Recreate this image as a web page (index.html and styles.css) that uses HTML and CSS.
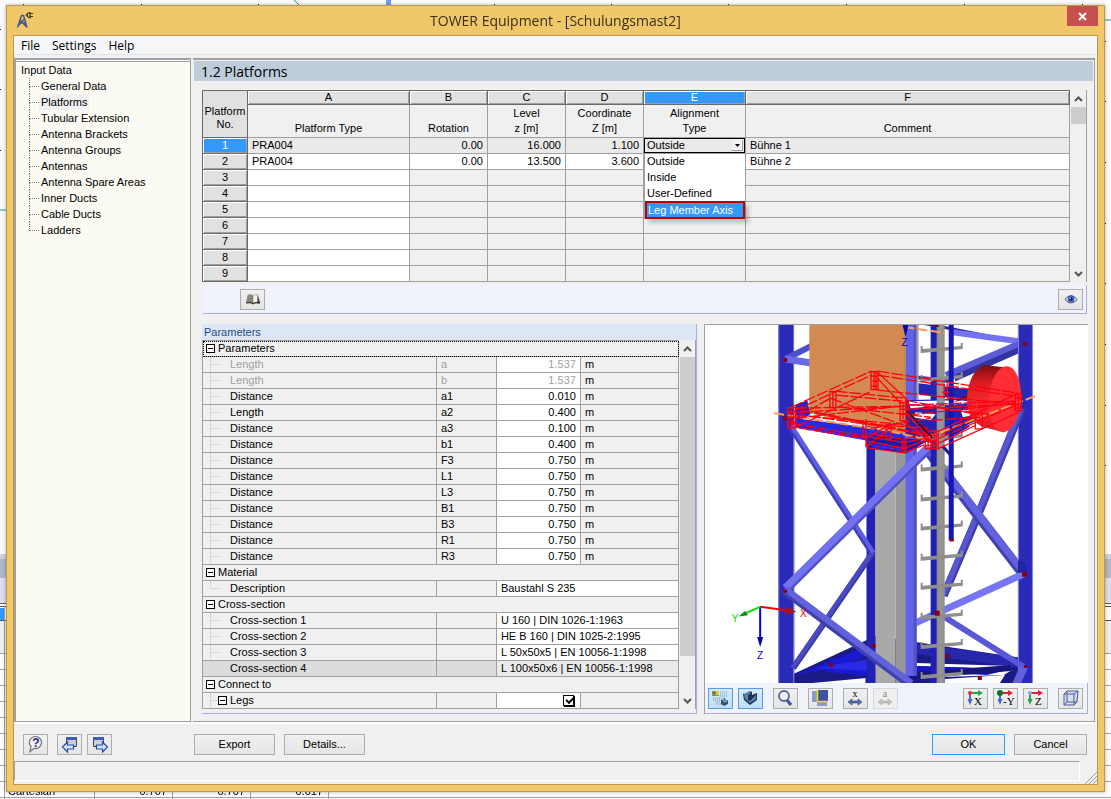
FILE: index.html
```html
<!DOCTYPE html>
<html lang="en">
<head>
    <meta charset="UTF-8">
    <meta name="viewport" content="width=device-width, initial-scale=1.0">
    <title>TOWER Equipment</title>

    <link rel="stylesheet" href="styles.css">
</head>
<body>
<!-- main program behind the dialog -->
<svg class="backdrop" aria-hidden="true">
    <g fill="#222">
        <path d="M23 4h1v1h-1zM141 4h1v1h-1zM258 4h1v1h-1zM494 4h1v1h-1zM611 4h1v1h-1zM728 4h1v1h-1zM846 4h1v1h-1zM964 4h1v1h-1zM1082 4h1v1h-1z"/>
        <path d="M0 29h1v1h-1zM0 89h1v1h-1zM0 150h1v1h-1zM1105 41h1v1h-1zM1105 101h1v1h-1zM1105 162h1v1h-1zM1105 223h1v1h-1zM1105 283h1v1h-1zM1105 344h1v1h-1zM1105 405h1v1h-1zM1105 465h1v1h-1z"/>
    </g>
    <path d="M294 0l5 5M0 210h6M1105 20h6" stroke="#2a8f8f"/>
    <path d="M386 0h5v5h-5z" fill="#6ea3e8"/>
    <rect y="554" width="100%" height="5" fill="#cdd2e2"/>
    <rect y="559" width="100%" height="19" fill="#b2b9c4"/>
    <rect y="578" width="100%" height="25" fill="#dcdfeb"/>
    <rect y="603" width="100%" height="1" fill="#666"/>
    <rect y="606" width="100%" height="1" fill="#555"/>
    <rect y="608" width="4" height="12" fill="#3399ff"/>
    <rect y="620" width="100%" height="1" fill="#555"/>
    <rect y="621" width="100%" height="32" fill="#efefef"/>
    <path d="M0 653.5h1920M0 669.5h1920M0 685.5h1920M0 701.5h1920M0 717.5h1920M0 733.5h1920M0 749.5h1920M0 765.5h1920M0 781.5h1920M0 797.5h1920M4.500 606v193M94.500 781v18M172.500 781v18M250.500 781v18M328.500 781v18" stroke="#a0a0a0"/>
    <g font-family="Liberation Sans, sans-serif" font-size="11">
        <text x="8" y="795">Cartesian</text>
        <text x="167" y="795" text-anchor="end">0.707</text>
        <text x="245" y="795" text-anchor="end">0.707</text>
        <text x="323" y="795" text-anchor="end">0.017</text>
    </g>
</svg>

<div class="window">
    <header class="titlebar">
        <svg class="appicon" width="18" height="18" viewBox="0 0 18 18" fill="none" stroke="#4a5590">
            <path d="M1.500 16.500l4-12h2l3.500 12M3 12h7M4 8.500l6 7M8 8.500l-5.500 6" stroke-width="1.500"/>
            <path d="M9.500 4h2.500M14 2.500h3M14 5.500h3M14 1v6.500M14 1.500q-3 0-3 2.500t3 2.500" stroke="#3a3320" stroke-width="1.200"/>
        </svg>
        <h1>TOWER Equipment - [Schulungsmast2]</h1>
        <button class="close" aria-label="Close"><svg width="9" height="9" viewBox="0 0 9 9"><path d="M1 1l7 7M8 1l-7 7" stroke="#fff" stroke-width="2"/></svg></button>
    </header>

    <div class="client">
        <nav class="menu">
            <a href="#file">File</a>
            <a href="#settings">Settings</a>
            <a href="#help">Help</a>
        </nav>

        <div class="main">
            <aside class="tree">
                <div>Input Data</div>
                <ul>
                    <li><a href="#general">General Data</a></li>
                    <li><a href="#platforms" class="active">Platforms</a></li>
                    <li><a href="#tubular">Tubular Extension</a></li>
                    <li><a href="#brackets">Antenna Brackets</a></li>
                    <li><a href="#groups">Antenna Groups</a></li>
                    <li><a href="#antennas">Antennas</a></li>
                    <li><a href="#spare">Antenna Spare Areas</a></li>
                    <li><a href="#inner">Inner Ducts</a></li>
                    <li><a href="#cable">Cable Ducts</a></li>
                    <li><a href="#ladders">Ladders</a></li>
                </ul>
            </aside>

            <section class="content">
                <h2>1.2 Platforms</h2>

                <div class="gridbox">
                    <table class="grid">
                        <colgroup>
                            <col class="c-no"><col class="c-a"><col class="c-n"><col class="c-n"><col class="c-n"><col class="c-e"><col>
                        </colgroup>
                        <thead>
                            <tr class="letters">
                                <th rowspan="2" class="corner">Platform<br>No.</th>
                                <th>A</th><th>B</th><th>C</th><th>D</th><th class="sel">E</th><th>F</th>
                            </tr>
                            <tr class="names">
                                <th>Platform Type</th>
                                <th>Rotation</th>
                                <th>Level<br>z [m]</th>
                                <th>Coordinate<br>Z [m]</th>
                                <th>Alignment<br>Type</th>
                                <th>Comment</th>
                            </tr>
                        </thead>
                        <tbody>
                            <tr class="current">
                                <th class="sel">1</th><td>PRA004</td><td class="num">0.00</td><td class="num">16.000</td><td class="num">1.100</td>
                                <td class="combo">
                                    <select aria-label="Alignment type"><option>Outside</option></select>
                                    <svg class="arrow" width="11" height="11" viewBox="0 0 11 11"><path d="M0 0h11v11h-11z" fill="#f4f4f4"/><path d="M0 10.500h10.500v-10.500" fill="none" stroke="#a0a0a0"/><path d="M3 4h5l-2.500 3z"/></svg>
                                    <ul class="dropdown">
                                        <li>Outside</li>
                                        <li>Inside</li>
                                        <li>User-Defined</li>
                                        <li class="marked">Leg Member Axis</li>
                                    </ul>
                                </td>
                                <td>Bühne 1</td>
                            </tr>
                            <tr class="filled"><th>2</th><td>PRA004</td><td class="num">0.00</td><td class="num">13.500</td><td class="num">3.600</td><td></td><td>Bühne 2</td></tr>
                            <tr><th>3</th><td></td><td></td><td></td><td></td><td></td><td></td></tr>
                            <tr><th>4</th><td></td><td></td><td></td><td></td><td></td><td></td></tr>
                            <tr><th>5</th><td></td><td></td><td></td><td></td><td></td><td></td></tr>
                            <tr><th>6</th><td></td><td></td><td></td><td></td><td></td><td></td></tr>
                            <tr><th>7</th><td></td><td></td><td></td><td></td><td></td><td></td></tr>
                            <tr><th>8</th><td></td><td></td><td></td><td></td><td></td><td></td></tr>
                            <tr><th>9</th><td></td><td></td><td></td><td></td><td></td><td></td></tr>
                        </tbody>
                    </table>
                    <div class="scroll">
                        <svg width="9" height="6" viewBox="0 0 9 6"><path d="M1 5l3.500-3.500l3.500 3.500" fill="none" stroke="#555" stroke-width="2"/></svg>
                        <div class="track"><div class="thumb small"></div></div>
                        <svg width="9" height="6" viewBox="0 0 9 6"><path d="M1 1l3.500 3.500l3.500-3.500" fill="none" stroke="#555" stroke-width="2"/></svg>
                    </div>
                </div>

                <div class="toolbar gridtools">
                    <button class="tool" aria-label="Library"><svg width="16" height="14" viewBox="0 0 18 16"><path d="M1 12l2-9q4-1 6 1v9q-3-2-8-1z" fill="#8b8478"/><path d="M9 4q3-2 5-1l3 9q-5-1-8 1z" fill="#f4f0e6" stroke="#777" stroke-width=".6"/><path d="M14 3l3 9v1h-3z" fill="#444"/><path d="M1 12.500q6-1 8 1q3-2 8-1" fill="none" stroke="#333" stroke-width="1.400"/></svg></button>
                    <button class="tool" aria-label="View"><svg width="14" height="11" viewBox="0 0 16 12"><path d="M1 6q7-9 14 0q-7 8-14 0z" fill="#e8ecf6" stroke="#444"/><circle cx="8" cy="5.500" r="4" fill="#3e63c8"/><circle cx="8" cy="5.500" r="1.700" fill="#0d1a4a"/><circle cx="7" cy="4.500" r=".8" fill="#fff"/></svg></button>
                </div>

                <div class="lower">
                    <div class="params">
                        <h3>Parameters</h3>
                        <div class="parambox">
                            <table class="plist">
                                <colgroup><col><col class="p-sym"><col class="p-val"><col class="p-unit"></colgroup>
                                <tbody>
                                <tr class="group focus"><th colspan="4"><i class="minus"></i>Parameters</th></tr>
                                <tr class="off"><th>Length</th><td>a</td><td class="val">1.537</td><td>m</td></tr>
                                <tr class="off"><th>Length</th><td>b</td><td class="val">1.537</td><td>m</td></tr>
                                <tr><th>Distance</th><td>a1</td><td class="val">0.010</td><td>m</td></tr>
                                <tr><th>Length</th><td>a2</td><td class="val">0.400</td><td>m</td></tr>
                                <tr><th>Distance</th><td>a3</td><td class="val">0.100</td><td>m</td></tr>
                                <tr><th>Distance</th><td>b1</td><td class="val">0.400</td><td>m</td></tr>
                                <tr><th>Distance</th><td>F3</td><td class="val">0.750</td><td>m</td></tr>
                                <tr><th>Distance</th><td>L1</td><td class="val">0.750</td><td>m</td></tr>
                                <tr><th>Distance</th><td>L3</td><td class="val">0.750</td><td>m</td></tr>
                                <tr><th>Distance</th><td>B1</td><td class="val">0.750</td><td>m</td></tr>
                                <tr><th>Distance</th><td>B3</td><td class="val">0.750</td><td>m</td></tr>
                                <tr><th>Distance</th><td>R1</td><td class="val">0.750</td><td>m</td></tr>
                                <tr><th>Distance</th><td>R3</td><td class="val">0.750</td><td>m</td></tr>
                                <tr class="group"><th colspan="4"><i class="minus"></i>Material</th></tr>
                                <tr class="last"><th>Description</th><td></td><td colspan="2" class="txt">Baustahl S 235</td></tr>
                                <tr class="group"><th colspan="4"><i class="minus"></i>Cross-section</th></tr>
                                <tr><th>Cross-section 1</th><td></td><td colspan="2" class="txt">U 160 | DIN 1026-1:1963</td></tr>
                                <tr><th>Cross-section 2</th><td></td><td colspan="2" class="txt">HE B 160 | DIN 1025-2:1995</td></tr>
                                <tr><th>Cross-section 3</th><td></td><td colspan="2" class="txt">L 50x50x5 | EN 10056-1:1998</td></tr>
                                <tr class="picked"><th>Cross-section 4</th><td></td><td colspan="2" class="txt">L 100x50x6 | EN 10056-1:1998</td></tr>
                                <tr class="group"><th colspan="4"><i class="minus"></i>Connect to</th></tr>
                                <tr class="sub"><th><i class="minus"></i><label for="legs">Legs</label></th><td></td><td class="val"><input type="checkbox" id="legs" checked></td><td></td></tr>
                                </tbody>
                            </table>
                            <div class="scroll">
                                <svg width="9" height="6" viewBox="0 0 9 6"><path d="M1 5l3.500-3.500l3.500 3.500" fill="none" stroke="#555" stroke-width="2"/></svg>
                                <div class="track"><div class="thumb long"></div></div>
                                <svg width="9" height="6" viewBox="0 0 9 6"><path d="M1 1l3.500 3.500l3.500-3.500" fill="none" stroke="#555" stroke-width="2"/></svg>
                            </div>
                        </div>
                    </div>

                    <div class="view">
                        <svg class="scene" viewBox="705 325 382 357" preserveAspectRatio="xMidYMid slice">
                            <defs>
                                <linearGradient id="drum" x1="0" y1="0" x2="0" y2="1">
                                    <stop offset="0" stop-color="#7a0c10"/><stop offset=".25" stop-color="#d81c22"/><stop offset=".6" stop-color="#fa2a30"/><stop offset="1" stop-color="#d82026"/>
                                </linearGradient>
                            </defs>
                            <!-- far bracing -->
                            <g fill="none">
                                <path d="M916 322l107 21" stroke="#2a2a9c" stroke-width="3"/>
                                <path d="M950 332l73 10" stroke="#7474f2" stroke-width="6"/>
                                <path d="M953 377l70 -31" stroke="#3434a0" stroke-width="9"/>
                                <path d="M945 375l77 -33" stroke="#5c5cd8" stroke-width="6"/>
                                <path d="M905 376l45 5" stroke="#3a3ab4" stroke-width="4"/>
                            </g>
                            <!-- base frame -->
                            <path d="M778 682l0-2l97-45l146 22l-6 25z" fill="#1b1b86"/>
                            <path d="M795 674l80-32v10l-45 16zM830 658l50 8v10l-55-5z" fill="#1919d2"/>
                            <path d="M815 667l60-10 15 2 0 7-20 4z" fill="#2a2ae6"/>
                            <path d="M916 643l105 14v10l-105-14z" fill="#2727ae"/>
                            <path d="M916 662l95 3-8 3-87-3z" fill="#fff"/>
                            <path d="M812 682l54-5 0 5zM943 671l68-2-8 5-60 2zM944 678l60-4-5 8h-55z" fill="#fff"/>
                            <path d="M916 665l95 3-25 6-70-3z" fill="#1717c8"/>
                            <path d="M865 675l145-11v6l-145 12z" fill="#15157a"/>
                            <!-- columns -->
                            <path d="M866 325h9v357h-9z" fill="#2222b2"/>
                            <path d="M778 325h16v357h-16z" fill="#2a2ab8"/>
                            <path d="M1017 325h15v357h-15z" fill="#2a2ab8"/>
                            <path d="M778.500 325v357M793.500 325v357M1017.500 325v357M1031.500 325v357" stroke="#8a8ad6"/>
                            <path d="M794 410l72 20v-105h-72z" fill="#fff"/>
                            <path d="M785 359l26-13" stroke="#4e4ed0" stroke-width="6"/>
                            <path d="M785 359l26 4" stroke="#6a6ae6" stroke-width="7"/>
                            <!-- diagonals -->
                            <g fill="none">
                                <path d="M873 551l-80 116" stroke="#3b3ba4" stroke-width="6"/>
                                <path d="M872 551l-80 116" stroke="#4a4ac4" stroke-width="4"/>
                                <path d="M790 426l82 127" stroke="#3f3fb8" stroke-width="6"/>
                                <path d="M791 425l82 127" stroke="#5e5ee6" stroke-width="4"/>
                                <path d="M1021 408l-46 112-32 75" stroke="#3e3eae" stroke-width="8"/>
                                <path d="M1020 408l-46 112-32 75" stroke="#5757d2" stroke-width="5"/>
                                <path d="M926 449l96 124" stroke="#4040b0" stroke-width="10"/>
                                <path d="M927 448l96 124" stroke="#6262dc" stroke-width="7"/>
                                <path d="M1023 573l-108 49" stroke="#7676f4" stroke-width="7"/>
                                <path d="M937 612l86 54" stroke="#5858d6" stroke-width="6"/>
                                <path d="M1023 666l-8 18" stroke="#6262dc" stroke-width="8"/>
                            </g>
                            <path d="M1017 560h6l4 12h-10z" fill="#2323a8"/>
                            <!-- cable duct -->
                            <path d="M875 440h20v242h-20z" fill="#a9a9a9"/>
                            <path d="M895 440h11v242h-11z" fill="#989898"/>
                            <path d="M905 325h11v350h-11z" fill="#6262ea"/>
                            <path d="M913 325h3v350h-3z" fill="#5353c6"/>
                            <path d="M916 325h2v78h-2z" fill="#a0a0a8"/>
                            <g fill="none">
                                <path d="M928 448l-142 140" stroke="#5050c4" stroke-width="9"/>
                                <path d="M927 447l-142 140" stroke="#7272f2" stroke-width="7"/>
                                <path d="M784 590l126 94" stroke="#4040aa" stroke-width="8"/>
                                <path d="M785 588l126 94" stroke="#6262dc" stroke-width="6"/>
                            </g>
                            <path d="M930 325h8v357h-8z" fill="#2020b0"/>
                            <!-- antenna spare area -->
                            <path d="M809 325h96v109l-96-21z" fill="#d38a50"/>
                            <path d="M904.500 325v108" stroke="#b87848"/>
                            <!-- platform beams -->
                            <path d="M795 405l12-5 3 14-14 10z" fill="#2424c8"/>
                            <path d="M918 383l66 8v10l-66-7z" fill="#2525b4"/>
                            <path d="M795 418l80 10 30 6v12l-35-5-75-14z" fill="#2929de"/>
                            <path d="M868 435l60 5-22 13-37-5z" fill="#1b1ba8"/>
                            <path d="M872 444l30 3v3l-30-2z" fill="#2525e8"/>
                            <path d="M905 400l70-2 0 25-38 22-32-10z" fill="#2222b4"/>
                            <path d="M908 401l50-1 20 2-68 6zM960 410l40-1-38 8zM915 412l20 2-5 6-18-3zM966 425l25-13-20 15z" fill="#fff"/>
                            <path d="M936 325h8v357h-8z" fill="#909090"/>
                            <path d="M939 325h2v357h-2z" fill="#989898"/>
                            <!-- ladder rungs -->
                            <g fill="#8e8e8e">
                                <path id="rung" d="M920 346h2v3l38-3v-3h2v6l-41 4h-1z"/>
                                <use href="#rung" y="29"/><use href="#rung" y="88"/><use href="#rung" y="118"/><use href="#rung" y="148"/>
                                <use href="#rung" y="177"/><use href="#rung" y="207"/><use href="#rung" y="236"/><use href="#rung" y="266"/>
                                <use href="#rung" y="295"/><use href="#rung" y="325"/>
                            </g>
                            <path d="M948 325h5v215h-5z" fill="#1515b8"/>
                            <path d="M942 446l8 9" stroke="#1b1b90" stroke-width="3"/>
                            <!-- antenna -->
                            <path d="M953 402l30-8-10-4z" fill="#6a1020"/>
                            <path d="M984 365l25 3 -6 64-20-5q-16-6-17-28 2-28 18-34z" fill="url(#drum)"/>
                            <ellipse cx="1004" cy="399" rx="16" ry="33" transform="rotate(4 1004 399)" fill="#ff2d34"/>
                            <!-- platform wires -->
                            <g fill="none" stroke="#ff9a5a" stroke-width="2" stroke-dasharray="10 3">
                                <path d="M774 413l110 17 42 9M1034 396l-110 42M904 327l40 6"/>
                            </g>
                            <g fill="none" stroke="#ff0010" stroke-width="1.300">
                                <path d="M787.500 407.500h8v20h-8zM790.500 407v20M793.500 407v20M788 412h7M788 417h7M788 422h7"/>
                                <path d="M870.500 371.500h7v18h-7zM873.500 371v19M875.500 371v19M871 376h6M871 381h6M871 386h6"/>
                                <path d="M1014.500 393.500h6v17h-6zM1017.500 393v18M1015 398h5M1015 403h5M1015 408h5"/>
                                <path d="M924.500 430.500h13v18h-13zM927.500 430v18M930.500 429v19M933.500 430v18M935.500 431v17M925 435h13M925 440h13M925 445h13"/>
                                <path d="M899.500 402.500h8v18h-8zM902.500 403v16M905.500 398v18M900 409h8M900 414h8"/>
                                <path d="M829.500 391.500h6v16h-6zM832.500 392v15M946.500 383v17M941 392h8M974.500 413.500h7v15h-7zM977 421h2M943.500 384v14"/>
                                <path d="M864.500 437.500l3 10 36 5 20-8M865 436l38 6 22-4M867 433l37 6 24-8M868 441l36 7 25-10M862.500 419.500v18M865.500 419v28M885.500 424.500h5v14h-5zM865 438l25-14M865 447l25-20M901.500 440.500h4v12h-4zM903.500 440v12"/>
                                <path d="M907 410l20 22M907 414l26 30M902 420l28 22M877 378l23 25M877 372l30 28"/>
                                <path d="M938 448l80-36M938 443l37-18M940 435l35-19"/>
                            </g>
                            <g fill="none" stroke="#ff0010" stroke-width="1.300" stroke-dasharray="12 2">
                                <path d="M791 407l80-36M793 411l78-36M795 427l76-36M795 418l35-20"/>
                                <path d="M791 423l75 13M796 427l70 11M795 415l106 9M795 408l110-2M797 412l108-6M795 418l105-12M800 410l120 24M830 398l100 37"/>
                                <path d="M877 371l140 22M877 375l138 21M877 390l138 14M835 391l70 7M836 395l66 6"/>
                                <path d="M907 405l108-4M907 409l108-5M907 415l108-12M905 400l70 14M908 404l80 10M840 407l90 10M815 412l110 22"/>
                                <path d="M938 431l77-37M938 438l79-34"/>
                                <path d="M808 416l60 8 60 4M930 420l50-3M870 428l60-10"/>
                            </g>
                            <path d="M799 428l65 11M868 444l34 6M910 405l60 0" stroke="#a010b0" stroke-dasharray="5 2" fill="none"/>
                            <path d="M907 411l25 27" stroke="#2a0830" stroke-width="1.500"/>
                            <g fill="#8a0018">
                                <path d="M783 358h4v4h-4zM1022 342h4v4h-4zM783 416h4v4h-4zM949 538h4v3h-4zM1021 571h5v5h-5zM934 610h5v5h-5zM871 643h4v4h-4zM945 653h4v4h-4zM829 662h4v4h-4zM783 589h4v3h-4zM1023 664h3v3h-3zM934 324h4v3h-4zM977 675h4v4h-4z"/>
                            </g>
                            <!-- axes -->
                            <path d="M902 325h6l-3 12z" fill="#0808a0"/>
                            <path d="M760 606v37" stroke="#0000f0" stroke-width="2"/>
                            <path d="M757 636h6l-3 10z" fill="#0808a0"/>
                            <path d="M760 606l30 4" stroke="#f00000" stroke-width="2"/>
                            <path d="M786 606l10 5-11 3z" fill="#b01010"/>
                            <path d="M760 606l-16 7" stroke="#00e000" stroke-width="2"/>
                            <path d="M740 615l5-4 2 3z" fill="#108a10" stroke="#108a10"/>
                            <g font-family="Liberation Sans, sans-serif" font-size="10" text-anchor="middle">
                                <text x="904" y="346" fill="#0000c0">Z</text>
                                <text x="760" y="658" fill="#0000e0">Z</text>
                                <text x="803" y="616" fill="#e00000">X</text>
                                <text x="735" y="621" fill="#00d000">Y</text>
                            </g>
                        </svg>

                        <div class="toolbar viewtools">
                            <button class="tool on" aria-label="Show results"><svg width="18" height="18" viewBox="0 0 18 18"><path d="M1 2h7v5h-7z" fill="#6aa84f"/><path d="M2 3h2v2h-2z" fill="#d33"/><path d="M5 2h3v4h-3z" fill="#d8c83a"/><path d="M9 3h7M9 5h7M9 7h7M2 9h12M2 11h8M4 13h6M5 15h5" stroke="#7d93a8" stroke-dasharray="1 1"/><path d="M10 11l4-2 1 3 2-1v4l-4 2-3-2z" fill="#35536f"/><path d="M11 11l2-1v3l3-1" stroke="#9cc0dc" fill="none"/></svg></button>
                            <button class="tool on" aria-label="Show model"><svg width="18" height="18" viewBox="0 0 18 18"><path d="M2 5l7-3 2 1v3l5-2v7l-7 5-6-5z" fill="#1f3550"/><path d="M3 6l6-3 1 1-3 2v5l2 1 6-6v4l-6 4-5-4z" fill="#5b86b0"/><path d="M3 5l6-3" stroke="#a8cce8"/></svg></button>
                            <button class="tool gap" aria-label="Zoom"><svg width="18" height="18" viewBox="0 0 18 18"><path d="M11 11l4 5" stroke="#3a55a8" stroke-width="3"/><circle cx="8" cy="7" r="5" fill="#eef3fa" stroke="#55688f" stroke-width="1.800"/></svg></button>
                            <button class="tool gap" aria-label="Background"><svg width="18" height="18" viewBox="0 0 18 18"><path d="M1 2h6v11h-6z" fill="#8b9cc6"/><path d="M6 13h10v4h-10z" fill="#8b9cc6"/><path d="M6 1h11v12h-11z" fill="#3d529c"/><path d="M6.500 1v11.500h10.500" fill="none" stroke="#f2e400" stroke-width="1.500"/></svg></button>
                            <button class="tool gap" aria-label="Dimension x"><svg width="18" height="18" viewBox="0 0 18 18"><text x="9" y="8" text-anchor="middle" font-family="Liberation Serif, serif" font-size="10">x</text><path d="M2 13l4-3v2h6v-2l4 3-4 3v-2h-6v2z" fill="#4f6eb4" stroke="#2d3f70" stroke-width=".6"/></svg></button>
                            <button class="tool" disabled aria-label="Dimension a"><svg width="18" height="18" viewBox="0 0 18 18"><text x="9" y="8" text-anchor="middle" font-family="Liberation Serif, serif" font-size="10" fill="#888">a</text><path d="M2 13l4-3v2h6v-2l4 3-4 3v-2h-6v2z" fill="#c4c4bc" stroke="#a8a8a0" stroke-width=".6"/></svg></button>
                            <button class="tool push" aria-label="View X"><svg width="20" height="18" viewBox="0 0 20 18"><path d="M4 4h9" stroke="#20a850" stroke-width="2"/><path d="M12 1l5 3-5 3z" fill="#20a850"/><path d="M4 4v8" stroke="#4468d0" stroke-width="2"/><path d="M1.500 10h5l-2.500 6z" fill="#4468d0"/><circle cx="4" cy="4" r="2" fill="#e03040"/><text x="8" y="16" font-family="Liberation Serif, serif" font-size="11">X</text></svg></button>
                            <button class="tool" aria-label="View -Y"><svg width="20" height="18" viewBox="0 0 20 18"><path d="M4 4h9" stroke="#e02038" stroke-width="2"/><path d="M12 1l5 3-5 3z" fill="#e02038"/><path d="M4 4v8" stroke="#4468d0" stroke-width="2"/><path d="M1.500 10h5l-2.500 6z" fill="#4468d0"/><circle cx="4" cy="4" r="3" fill="#187028"/><text x="7" y="16" font-family="Liberation Serif, serif" font-size="11">-Y</text></svg></button>
                            <button class="tool" aria-label="View Z"><svg width="20" height="18" viewBox="0 0 20 18"><path d="M4 4h9" stroke="#e02038" stroke-width="2"/><path d="M12 1l5 3-5 3z" fill="#e02038"/><path d="M4 4v8" stroke="#20a850" stroke-width="2"/><path d="M1.500 10h5l-2.500 6z" fill="#20a850"/><circle cx="4" cy="4" r="2" fill="#88a8e8"/><text x="9" y="16" font-family="Liberation Serif, serif" font-size="11">Z</text></svg></button>
                            <button class="tool gap" aria-label="Isometric view"><svg width="18" height="18" viewBox="0 0 18 18" fill="none" stroke="#4a5c90"><path d="M2 5l3-3h11l-1 11-3 3h-10z" fill="#d5deee"/><path d="M2 5h10v11M12 5l4-3M5 2v11h10M2 16l3-3"/></svg></button>
                        </div>
                    </div>
                </div>
            </section>
        </div>

        <footer class="buttons">
            <button class="tool" aria-label="Help"><svg width="18" height="18" viewBox="0 0 18 18"><path d="M9 1.500a6.500 6 0 1 1-2 12l-4 3 1-5a6.500 6 0 0 1 5-10z" fill="#eef0f4" stroke="#70757f" stroke-width="1.200"/><text x="9" y="12" text-anchor="middle" font-family="Liberation Sans, sans-serif" font-size="12" font-weight="bold" fill="#26336e">?</text></svg></button>
            <button class="tool gap" aria-label="Previous"><svg width="18" height="18" viewBox="0 0 18 18"><path d="M5.500 2.500h10v9h-10z" fill="#c9cfda" stroke="#444"/><path d="M5 2h11v3h-11z" fill="#3f5bb0"/><path d="M1.500 12l5-5v3h6v4h-6v3z" fill="#cfe0fa" stroke="#2b4ea8" stroke-width="1.200"/></svg></button>
            <button class="tool" aria-label="Next"><svg width="18" height="18" viewBox="0 0 18 18"><path d="M2.500 2.500h10v9h-10z" fill="#c9cfda" stroke="#444"/><path d="M2 2h11v3h-11z" fill="#3f5bb0"/><path d="M16.500 12l-5-5v3h-6v4h6v3z" fill="#cfe0fa" stroke="#2b4ea8" stroke-width="1.200"/></svg></button>
            <button class="btn export">Export</button>
            <button class="btn">Details...</button>
            <button class="btn ok">OK</button>
            <button class="btn">Cancel</button>
        </footer>
        <div class="status">
            <div class="field"></div>
            <svg width="12" height="12" viewBox="0 0 12 12" stroke="#999"><path d="M0 12l12-12M4 12l8-8M8 12l4-4"/></svg>
        </div>
    </div>
</div>
</body>
</html>
```

FILE: styles.css
```css
*{
    box-sizing: border-box;
}
body{
    margin: 0;
    min-height: 100vh;
    padding: 5px 6px 7px;
    display: flex;
    background-color: #fdfdfd;
    font-family: "Liberation Sans", Arial, sans-serif;
    font-size: 11px;
    line-height: 16px;
    color: #000;
}
h1, h2, h3, ul{
    margin: 0;
    padding: 0;
    font-weight: normal;
    list-style: none;
}
a{
    color: inherit;
    text-decoration: none;
}
button{
    font-family: inherit;
    font-size: 11px;
    padding: 0;
    color: #000;
}
svg{
    display: block;
    flex: none;
}
.backdrop{
    position: fixed;
    z-index: -1;
    top: 0;
    left: 0;
    width: 100%;
    height: 100%;
}

/* window frame */
.window{
    flex: 1;
    min-width: 0;
    display: flex;
    flex-direction: column;
    padding: 0 6px 6px;
    border: 1px solid #bd9a4a;
    background-color: #f0c869;
    box-shadow: 0 0 4px rgba(0, 0, 0, 0.3);
}
.titlebar{
    display: flex;
    align-items: flex-start;
    height: 29px;
}
.appicon{
    margin: 5px 0 0 3px;
}
.titlebar h1{
    flex: 1;
    font-family: "Open Sans", "Noto Sans", sans-serif;
    font-size: 14px;
    line-height: 30px;
    text-align: center;
    padding-left: 10px;
    color: #3b2f14;
}
.close{
    width: 31px;
    height: 20px;
    border: 0;
    background-color: #c75050;
    display: flex;
    align-items: center;
    justify-content: center;
}
.client{
    flex: 1;
    display: flex;
    flex-direction: column;
    border: 1px solid #bd9a4a;
    background-color: #f0f0f0;
}
.menu{
    display: flex;
    gap: 12px;
    height: 19px;
    padding-left: 7px;
    background-color: #f5f6f7;
    border-bottom: 1px solid #e6e6e6;
    font-family: "Open Sans", "Noto Sans", sans-serif;
    font-size: 12px;
    line-height: 20px;
}
.main{
    flex: 1;
    display: flex;
    gap: 2px;
    margin-top: 3px;
    border-bottom: 2px solid #fff;
}

/* navigation tree */
.tree{
    width: 177px;
    flex: none;
    padding: 2px 0 0 5px;
    border: 1px solid #a0a0a0;
    border-width: 2px 1px 1px 2px;
    box-shadow: inset 0 1px #fff, inset 0 2px #a0a0a0;
    background-color: #fbfbf3;
}
.tree ul{
    margin-left: 8px;
}
.tree li{
    position: relative;
    padding-left: 10px;
}
.tree li::before{
    content: "";
    position: absolute;
    left: 0;
    top: 0;
    width: 9px;
    height: 8px;
    border-left: 1px dotted #777;
    border-bottom: 1px dotted #777;
}
.tree li:not(:last-child)::after{
    content: "";
    position: absolute;
    left: 0;
    top: 8px;
    bottom: 0;
    border-left: 1px dotted #777;
}
.tree li a{
    display: inline-block;
    padding: 0 2px;
    vertical-align: top;
}
.tree .active{
    background-color: #f0f0f0;
}

/* right part */
.content{
    flex: 1;
    min-width: 0;
    display: flex;
    flex-direction: column;
    margin-right: 2px;
    padding: 1px 1px 7px;
    border: 1px solid #a0a0a0;
    border-width: 2px 1px 1px 0;
}
.content h2{
    height: 20px;
    padding-left: 7px;
    background-color: #bfccda;
    font-family: "Open Sans", "Noto Sans", sans-serif;
    font-size: 14px;
    line-height: 21px;
}
.gridbox{
    display: flex;
    gap: 1px;
    margin: 9px 6px 0 8px;
}
table{
    flex: 1;
    table-layout: fixed;
    border-spacing: 0;
    min-width: 0;
}
th, td{
    padding: 0 4px;
    height: 16px;
    line-height: 15px;
    border-right: 1px solid #a0a0a0;
    border-bottom: 1px solid #a0a0a0;
    font-weight: normal;
    white-space: nowrap;
}
.grid{
    border-left: 1px solid #6a6a6a;
    border-top: 1px solid #6a6a6a;
}
.c-no{ width: 45px; }
.c-a{ width: 162px; }
.c-n{ width: 78px; }
.c-e{ width: 102px; }
.grid td{
    background-color: #f0f0f0;
}
.grid td:nth-child(2), .grid .filled td{
    background-color: #fff;
}
.grid .current td{
    background-color: #eaeaea;
}
.letters th, .grid tbody th{
    padding: 0;
    background-color: #e1e1e1;
    border-color: #6a6a6a;
    box-shadow: inset 1px 1px #fff, inset -1px -1px #a0a0a0;
}
.letters th{
    height: 14px;
    line-height: 13px;
}
.letters .corner{
    line-height: 13px;
    padding-top: 8px;
    box-shadow: none;
}
.grid th.sel{
    background-color: #3399ff;
    color: #fff;
}
.names th{
    height: 33px;
    line-height: 15px;
    padding: 0 0 1px;
    vertical-align: bottom;
}
.num{
    text-align: right;
}
.grid .combo{
    position: relative;
    padding: 0;
}
.combo select{
    display: block;
    appearance: none;
    width: 100%;
    height: 15px;
    padding: 0 2px;
    border: 1px solid #000;
    border-radius: 0;
    background-color: transparent;
    font-family: inherit;
    font-size: 11px;
    line-height: 13px;
    color: #000;
    outline: 0;
}
.combo .arrow{
    position: absolute;
    top: 2px;
    right: 2px;
    pointer-events: none;
}
.dropdown{
    position: absolute;
    z-index: 2;
    top: 16px;
    left: 0;
    right: 0;
    background-color: #fff;
    border-left: 1px solid #a0a0a0;
}
.dropdown li{
    height: 16px;
    padding-left: 2px;
}
.dropdown .marked{
    height: 18px;
    margin-top: -1px;
    padding-left: 1px;
    line-height: 14px;
    border: 2px solid #c00000;
    background-color: #3399ff;
    color: #fff;
    box-shadow: 4px 4px 4px rgba(0, 0, 0, 0.2);
}

.scroll{
    width: 16px;
    flex: none;
    display: flex;
    flex-direction: column;
    align-items: center;
    gap: 5px;
    padding: 6px 0 5px;
    border-right: 1px solid #a0a0a0;
}
.track{
    flex: 1;
    width: 100%;
}
.thumb{
    background-color: #cdcdcd;
}
.thumb.small{ height: 17px; }
.thumb.long{ height: 89%; }

.toolbar{
    display: flex;
    align-items: center;
    background-color: #f0f4fa;
    border-right: 1px solid #aaaaee;
    border-bottom: 1px solid #aaaaee;
}
.tool{
    width: 25px;
    height: 21px;
    flex: none;
    border: 1px solid #adadad;
    background: linear-gradient(#f0f0f0, #e5e5e5);
    display: flex;
    align-items: center;
    justify-content: center;
}
.tool svg{
    overflow: visible;
}
.tool.on{
    border-color: #569de5;
    background: linear-gradient(#d6eafc, #c0dff8);
}
.tool:disabled{
    border-color: #d9d9d9;
    background: #efefef;
}
.gridtools{
    justify-content: space-between;
    height: 29px;
    margin: 3px 6px 0 9px;
    padding: 0 3px 0 37px;
}

/* parameters and 3D view */
.lower{
    flex: 1;
    display: flex;
    gap: 7px;
    margin: 10px 5px 0 8px;
}
.params{
    flex: 495;
    min-width: 0;
    border-right: 1px solid #aaaaee;
    border-bottom: 1px solid #aaaaee;
    padding-bottom: 3px;
}
.params h3{
    height: 16px;
    padding-left: 2px;
    font-size: 11px;
    background-color: #dce6f5;
    color: #1f4e82;
}
.parambox{
    display: flex;
    gap: 1px;
}
.plist{
    border-left: 1px solid #a0a0a0;
    border-top: 1px solid #a0a0a0;
}
.p-sym{ width: 60px; }
.p-val{ width: 84px; }
.p-unit{ width: 98px; }
.plist th{
    position: relative;
    padding-left: 27px;
    text-align: left;
}
.plist th::before{
    content: "";
    position: absolute;
    left: 7px;
    top: 7px;
    width: 11px;
    border-top: 1px solid #d8d8d8;
}
.plist th::after{
    content: "";
    position: absolute;
    left: 7px;
    top: 0;
    bottom: 0;
    border-left: 1px solid #d8d8d8;
}
.plist .last th::after{
    bottom: 8px;
}
.plist .group th{
    padding-left: 3px;
}
.plist .group th::before, .plist .group th::after,
.plist .picked th::before, .plist .picked th::after{
    display: none;
}
.plist .focus th{
    outline: 1px dotted #000;
    outline-offset: -1px;
}
.minus{
    display: inline-block;
    position: relative;
    z-index: 1;
    width: 9px;
    height: 9px;
    margin-right: 3px;
    vertical-align: -1px;
    border: 1px solid #000;
    background: linear-gradient(#000, #000) center / 5px 1px no-repeat #fff;
}
.plist .sub th{
    padding-left: 15px;
}
.plist .val{
    background-color: #fff;
    text-align: right;
}
.plist .txt{
    background-color: #fff;
}
.plist .off th, .plist .off td:nth-child(2), .plist .off .val{
    color: #a0a0a0;
}
.plist .picked th, .plist .picked td{
    background-color: #dcdcdc;
}
.plist .picked .txt{
    background-color: #eaeaea;
}
.plist input{
    appearance: none;
    position: relative;
    display: block;
    width: 11px;
    height: 11px;
    margin: 0 2px 0 auto;
    border: 1px solid #000;
    box-shadow: 1px 1px #000;
    background-color: #fff;
}
.plist input:checked::before{
    content: "";
    position: absolute;
    left: 2px;
    top: 1px;
    width: 6px;
    height: 3px;
    border-left: 2px solid #000;
    border-bottom: 2px solid #000;
    transform: rotate(-45deg);
}

.view{
    flex: 384;
    min-width: 0;
    display: flex;
    flex-direction: column;
    border-left: 1px solid #a0a0a0;
    border-top: 1px solid #a0a0a0;
    background-color: #fff;
}
.scene{
    flex: 1 1 0;
    width: 100%;
    min-height: 357px;
}
.viewtools{
    height: 31px;
    gap: 5px;
    padding: 0 4px 0 3px;
}
.viewtools .gap{
    margin-left: 5px;
}
.viewtools .push{
    margin-left: auto;
}

/* bottom */
.buttons{
    display: flex;
    align-items: center;
    gap: 5px;
    height: 37px;
    padding: 3px 10px 0 9px;
}
.buttons .gap{
    margin-left: 4px;
}
.btn{
    width: 73px;
    height: 21px;
    border: 1px solid #adadad;
    background: linear-gradient(#f0f0f0, #e5e5e5);
}
.btn.export{
    margin: 0 4px 0 77px;
}
.btn.export, .btn.export + .btn{
    width: 81px;
}
.btn.ok{
    margin: 0 4px 0 auto;
    border-color: #3399ff;
}
.status{
    display: flex;
    justify-content: space-between;
    align-items: flex-end;
    height: 23px;
}
.field{
    flex: 1;
    margin-right: 5px;
    align-self: flex-start;
    height: 20px;
    border: 1px solid #a0a0a0;
    border-right-color: #fff;
    border-bottom-color: #fff;
}
```
